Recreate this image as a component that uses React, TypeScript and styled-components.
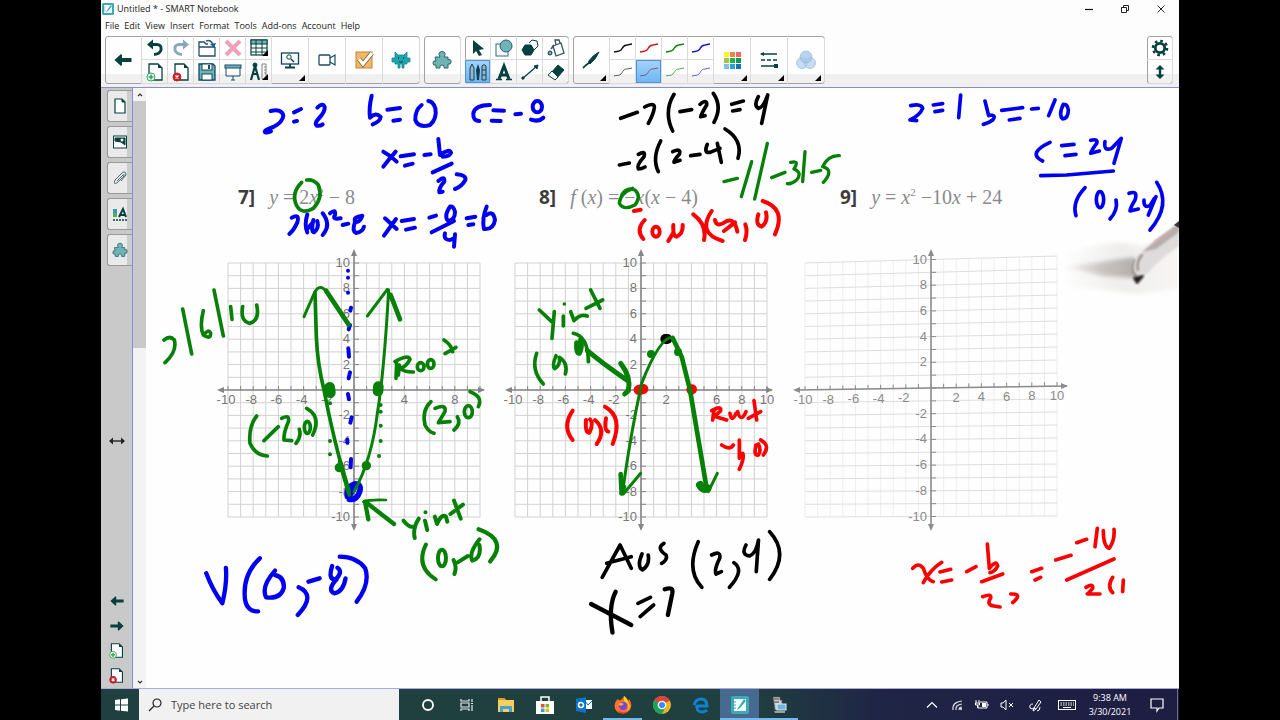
import React from "react";
import styled, { createGlobalStyle, css } from "styled-components";

const DARK = "#06403f";
const TEAL = "#6fb3b6";
const BLUE = "#0000f0";
const GREEN = "#078007";
const RED = "#fa0202";
const BLACK = "#000000";

const Global = createGlobalStyle`
  * { box-sizing: border-box; }
  body { margin: 0; background: #000; font-family: "Open Sans", "Noto Sans", sans-serif; }
  button { font: inherit; border: 0; padding: 0; background: none; color: inherit; }
`;

const Screen = styled.div`
  display: flex;
  flex-direction: column;
  min-height: 100vh;
  margin: 0 101px;
  background: #fdfdfd;
`;

const TitleBar = styled.header`
  display: flex;
  align-items: center;
  height: 17px;
  padding-left: 1px;
  font-size: 10px;
  color: #222;
`;

const Title = styled.h1`
  margin: 0 auto 0 3px;
  font-size: 9px;
  font-weight: 400;
`;

const WindowButton = styled.button`
  display: grid;
  place-items: center;
  width: 36px;
  height: 16px;
`;

const MenuBar = styled.nav`
  display: flex;
  align-items: center;
  gap: 5px;
  height: 16px;
  padding-left: 4px;
  font-size: 9px;
  color: #222;
`;

const ToolBar = styled.div`
  display: flex;
  gap: 4px;
  height: 55px;
  padding: 3px 6px 3px 4px;
  background: linear-gradient(#fdfdfd 41px, #f0f0f0 41px);
  border-bottom: 1px solid #8c8cc6;
`;

const ToolGroup = styled.div<{ $end?: boolean }>`
  display: flex;
  height: 48px;
  outline: 1px solid #a2a2a2;
  outline-offset: -1px;
  border-radius: 3px;
  overflow: hidden;
  background: linear-gradient(#fefefe 38px, #f1f1f1 38px);
  ${(p) => p.$end && "margin-left: auto;"}
`;

const Pairs = styled.div<{ $cols: number }>`
  display: grid;
  grid-template-columns: repeat(${(p) => p.$cols}, 26px);
  grid-template-rows: 24px 24px;
`;

const corner = css`
  &::after {
    content: "";
    position: absolute;
    right: 3px;
    bottom: 3px;
    border: 3px solid transparent;
    border-right-color: #000;
    border-bottom-color: #000;
  }
`;

const ToolButton = styled.button<{ $wide?: boolean; $menu?: boolean; $on?: boolean }>`
  position: relative;
  display: grid;
  place-items: center;
  width: ${(p) => (p.$wide ? "37px" : "auto")};
  border-right: 1px solid #dadada;
  ${Pairs} & {
    border-bottom: 1px solid #dadada;
  }
  ${(p) => p.$on && "background: linear-gradient(#a4d4fb, #6cb4f0); box-shadow: inset 0 0 0 1px #4d95d6;"}
  ${(p) => p.$menu && corner}
`;

const Main = styled.main`
  display: flex;
  flex: 1;
  border-bottom: 1px solid #a9a9dc;
`;

const SideBar = styled.aside`
  display: flex;
  flex-direction: column;
  align-items: center;
  width: 32px;
  padding-top: 2px;
  background: #c9c9c9;
  border-right: 1px solid #8c8cdc;
`;

const Tabs = styled.div`
  display: flex;
  flex-direction: column;
  align-self: flex-end;
  gap: 4px;
`;

const Tab = styled.button`
  display: grid;
  place-items: center;
  width: 25px;
  height: 32px;
  border: 1px solid #999;
  border-right: 0;
  border-radius: 3px 0 0 3px;
  background: linear-gradient(90deg, #eaeaea 19px, #cdcdcd 19px);
`;

const DragHandle = styled.button`
  margin: auto 0;
  padding-top: 32px;
`;

const PageTools = styled.div`
  display: flex;
  flex-direction: column;
`;

const PageTool = styled.button`
  display: grid;
  place-items: center;
  width: 24px;
  height: 25px;
`;

const ScrollBar = styled.div`
  display: flex;
  flex-direction: column;
  width: 13px;
  background: #f3f3f3;
`;

const ScrollButton = styled.button`
  display: grid;
  place-items: center;
  height: 13px;
`;

const Track = styled.div`
  flex: 1;
  display: flex;
`;

const Thumb = styled.div`
  width: 13px;
  height: 43%;
  background: #c9c9c9;
`;

const Sheet = styled.section`
  position: relative;
  flex: 1;
  min-width: 0;
  overflow: hidden;
  padding-top: 93px;
  background: #fefefe;
`;

const Equations = styled.div`
  display: flex;
  height: 65px;
  padding-left: 92px;
`;

const Equation = styled.h2`
  display: flex;
  align-items: baseline;
  gap: 14px;
  flex: none;
  width: 301px;
  margin: 0;
  font: 400 20px/32px "Liberation Serif", serif;
  color: #8a8a8a;
  white-space: nowrap;
  b { font: 700 19px/32px "Open Sans", sans-serif; color: #3c3c3c; }
  sup { font-size: 11px; line-height: 1; }
`;

const Graphs = styled.div`
  display: flex;
  gap: 12px;
  padding-left: 70px;
  svg { flex: none; display: block; }
`;

const InkLayer = styled.svg`
  position: absolute;
  top: 0;
  left: 0;
  pointer-events: none;
`;

const TaskBar = styled.footer`
  display: flex;
  height: 31px;
  background: linear-gradient(90deg, #20403f 60%, #1f2545 72%, #1e1d42);
  color: #fff;
`;

const TaskButton = styled.button<{ $open?: boolean; $on?: boolean }>`
  display: grid;
  place-items: center;
  width: 39px;
  height: 31px;
  ${(p) => p.$on && "background: #466a90;"}
  ${(p) => p.$open && "box-shadow: inset 0 -2px #76b9ed;"}
`;

const Search = styled.label`
  display: flex;
  align-items: center;
  gap: 8px;
  width: 260px;
  margin-left: -1px;
  margin-right: 9px;
  padding-left: 8px;
  background: #f1f1f1;
  color: #333;
`;

const SearchInput = styled.input`
  flex: 1;
  min-width: 0;
  border: 0;
  padding: 0;
  background: none;
  font: 400 11px/20px "Open Sans", sans-serif;
  &::placeholder { color: #444; opacity: 1; }
`;

const Tray = styled.div`
  display: flex;
  align-items: center;
  margin-left: auto;
  border-right: 1px solid #6c6c88;
  margin-right: 1px;
`;

const TrayButton = styled.button<{ $w?: number }>`
  display: grid;
  place-items: center;
  width: ${(p) => p.$w ?? 25}px;
  height: 31px;
`;

const Clock = styled.time`
  width: 54px;
  text-align: center;
  font-size: 9px;
  line-height: 14px;
`;

type IconProps = { size?: number; children: React.ReactNode };
const Icon = ({ size = 24, children }: IconProps) => (
  <svg width={size} height={size} viewBox={`${-size / 2} ${-size / 2} ${size} ${size}`} fill="none" stroke={DARK} strokeWidth="1" aria-hidden="true">
    {children}
  </svg>
);

const arrowLeft = "M-8.500 0 L-2 -6 L-1 -5 V-2 H8.500 V2 H-1 V5 L-2 6 Z";
const puzzle =
  "M-7 -3 H-2 Q-5 -8 0 -8.500 Q5 -8 2 -3 H6 V0 Q9 -2 9 2 Q9 5 6 4 V8 H2 Q3 5 0 5 Q-3 5 -2 8 H-6 V5 Q-9 6 -9 3 Q-9 0 -6 1 Z";
const sheetPath = "M-6 -8 H3 L7 -4 V8 H-6 Z";
const squiggle = "M-9 4 C-6 3 -4 4 -2 2 C0 0 0 -3 4 -3 L9 -4";

const NewPage = ({ bad, size }: { bad?: boolean; size?: number }) => (
  <svg width={size ?? 20} height={size ?? 20} viewBox="-10 -10 20 20" fill="none" aria-hidden="true">
    <path d={sheetPath} fill="#fff" stroke={DARK} strokeWidth="1.300" />
    <path d="M3 -8 L7 -4 H3 Z" fill={DARK} />
    <circle cx="-4" cy="5" r="4" fill={bad ? "#c8202c" : "#fff"} stroke={bad ? "#c8202c" : "#31a455"} />
    {bad ? <path d="M-5.500 3.500 l3 3 m0 -3 l-3 3" stroke="#fff" strokeWidth="1.400" /> : <path d="M-4 2.500 v5 M-6.500 5 h5" stroke="#31a455" strokeWidth="1.600" />}
  </svg>
);

const Squiggle = ({ c, thin }: { c: string; thin?: boolean }) => (
  <Icon>
    <path d={squiggle} stroke={c} strokeWidth={thin ? 0.8 : 1.4} />
  </Icon>
);

const Bubble = ({ r, fill, x, y }: { r: number; fill: string; x: number; y: number }) => (
  <circle cx={x} cy={y} r={r} fill={fill} fillOpacity="0.750" stroke="#8faed2" strokeWidth="0.600" />
);

const palette = ["#fff21c", "#f5814e", "#ef6868", "#9cca3c", "#20b14c", "#109a43", "#85bfe8", "#2b9fd8", "#1272b4"];

function Tools() {
  return (
    <ToolBar role="toolbar" aria-label="Tools">
      <ToolGroup>
        <ToolButton $wide aria-label="Previous page"><Icon><path d={arrowLeft} fill={DARK} stroke="none" /></Icon></ToolButton>
        <Pairs $cols={5}>
          <ToolButton aria-label="Undo"><Icon size={20}><path d="M-4 -3.500 H2 Q7 -3 6 2 Q5 6 -1 6.500" strokeWidth="3" /><path d="M-8 -3.500 L-2 -8.500 V1.500 Z" fill={DARK} stroke="none" /></Icon></ToolButton>
          <ToolButton aria-label="Redo"><Icon size={20}><path d="M4 -3.500 H-2 Q-7 -3 -6 2 Q-5 6 1 6.500" strokeWidth="3" stroke="#86a9bb" /><path d="M8 -3.500 L2 -8.500 V1.500 Z" fill="#86a9bb" stroke="none" /></Icon></ToolButton>
          <ToolButton aria-label="Open file"><Icon size={20}><path d="M-8 8 V-6 H-3 L-1 -4 H1 M8 -1 V8 H-8 M-8 -1 H8" stroke="#1e4f6c" strokeWidth="1.300" /><path d="M-1 -7 Q4 -9 6 -3" stroke="#1d5d8a" strokeWidth="1.600" /><path d="M3 -4 L9 -5 L7 0 Z" fill="#1d5d8a" stroke="none" /></Icon></ToolButton>
          <ToolButton aria-label="Delete"><Icon size={20}><path d="M-7 -7 L7 7 M7 -7 L-7 7" stroke="#efa0ba" strokeWidth="4" /></Icon></ToolButton>
          <ToolButton $menu aria-label="Table"><Icon size={20}><rect x="-8" y="-8" width="16" height="15" fill="#fff" strokeWidth="1.200" /><rect x="-8" y="-8" width="16" height="4" fill={TEAL} /><path d="M-8 0 H8 M-8 4 H8 M-3 -8 V7 M3 -8 V7" /></Icon></ToolButton>
          <ToolButton aria-label="Add page"><NewPage /></ToolButton>
          <ToolButton aria-label="Delete page"><NewPage bad /></ToolButton>
          <ToolButton aria-label="Save"><Icon size={20}><path d="M-8 -8 H6 L8 -6 V8 H-8 Z" fill={TEAL} stroke="#124b63" strokeWidth="1.300" /><rect x="-5" y="-8" width="10" height="6" fill="#fff" stroke="#124b63" /><rect x="-5" y="2" width="10" height="6" fill="#fff" stroke="#124b63" /><path d="M2 -7 V-3" stroke="#124b63" strokeWidth="2" /></Icon></ToolButton>
          <ToolButton aria-label="Screen shade"><Icon size={20}><rect x="-8" y="-7" width="16" height="3" fill={TEAL} stroke="#164c68" /><path d="M-7 -4 V4 H7 V-4 M0 4 V8 M-2 8 H2" stroke="#164c68" /></Icon></ToolButton>
          <ToolButton $menu aria-label="Measurement tools"><Icon size={20}><path d="M-4 -6 L-8 8 M-4 -6 L0 8 M-6 2 H-2" strokeWidth="2.200" /><circle cx="-4" cy="-7" r="2" fill={DARK} /><path d="M3 -8 H7 V7 H3 Z M5 -5 H7 M5 -2 H7 M5 1 H7" stroke="#848484" /></Icon></ToolButton>
        </Pairs>
        <ToolButton $wide $menu aria-label="Display view"><Icon><rect x="-8.500" y="-7" width="17" height="11" stroke="#12405c" strokeWidth="1.300" /><path d="M0 4 V7 M-5 7.500 H5" strokeWidth="1.800" /><circle cx="-1" cy="-3" r="2.200" /><path d="M1 -1 L4 2" strokeWidth="1.500" /></Icon></ToolButton>
        <ToolButton $wide aria-label="Record"><Icon><rect x="-8" y="-5" width="11" height="10" rx="1" stroke="#164c68" strokeWidth="1.300" /><path d="M3 -2 L8 -5 V5 L3 2" stroke="#164c68" strokeWidth="1.200" /></Icon></ToolButton>
        <ToolButton $wide aria-label="Assessment"><Icon><rect x="-8" y="-8" width="16" height="16" fill="#f5b764" stroke="#bd853f" /><path d="M-5 -1 L-1 4 L8 -7" stroke="#7a5a30" strokeWidth="4.600" /><path d="M-5 -1 L-1 4 L8 -7" stroke="#fff" strokeWidth="3.200" /></Icon></ToolButton>
        <ToolButton $wide aria-label="Activity monster"><Icon><path d="M-6 -8 L-3 -5 H3 L6 -8 V-2 H9 V2 H6 V4 H3 V8 H1 V4 H-1 V8 H-3 V4 H-6 V2 H-9 V-2 H-6 Z" fill="#1ba5ad" stroke="#128994" strokeWidth="0.800" /><path d="M-3 -2 h1 M2 -2 h1" strokeWidth="2" /><path d="M-2 2 H2" /></Icon></ToolButton>
      </ToolGroup>
      <ToolGroup>
        <ToolButton $wide aria-label="Add-ons"><Icon><path d={puzzle} fill={TEAL} stroke="#2f686e" /></Icon></ToolButton>
      </ToolGroup>
      <ToolGroup>
        <Pairs $cols={4}>
          <ToolButton aria-label="Select"><Icon size={20}><path d="M-5 -8 V6 L-2 3 L1 8 L4 7 L1 2 L6 1 Z" fill={DARK} stroke="none" /></Icon></ToolButton>
          <ToolButton aria-label="Shapes"><Icon size={20}><rect x="-8" y="-4" width="12" height="12" stroke="#2b6c80" /><circle cx="2" cy="-2" r="6" fill={TEAL} stroke="#226478" /></Icon></ToolButton>
          <ToolButton aria-label="Regular polygons"><Icon size={20}><path d="M-1 -5 L2 -8 L7 -7 L8 -2 L4 2" /><path d="M-8 2 L-5 -3 H1 L4 2 L1 7 H-5 Z" fill={DARK} /></Icon></ToolButton>
          <ToolButton aria-label="Fill"><Icon size={20}><path d="M-3 -2 L5 -5 L8 5 L0 8 Z M0 -3 L-1 -8 H3 L4 -5" stroke="#34535b" strokeWidth="1.300" /><path d="M-2 -3 L-5 1" stroke="#34535b" strokeWidth="1.600" /><circle cx="-6" cy="5" r="2" fill={TEAL} stroke={DARK} /></Icon></ToolButton>
          <ToolButton $on aria-label="Pens"><Icon size={20}><path d="M-8 8 V-4 L-6 -8 L-4 -4 V8 Z M4 8 V-6 Q6 -9 8 -6 V8 Z M4 -2 H8 M4 3 H8" stroke="#173f56" fill="#8fb9cc" /><path d="M0 -8 L2 -2 L1 8 H-1 L-2 -2 Z" fill="#103d52" stroke="none" /></Icon></ToolButton>
          <ToolButton aria-label="Text"><Icon size={20}><path d="M-5 7 L0 -6 L5 7 M-4 3 H4" strokeWidth="3" /><path d="M-8 7.500 H-2 M2 7.500 H8" strokeWidth="1.600" /></Icon></ToolButton>
          <ToolButton aria-label="Lines"><Icon size={20}><path d="M-8 7 L7 -6" strokeWidth="1.300" /><path d="M8 -7 L4 -6 L7 -3 Z M-8 5 h2 v2 h-2 Z" fill={DARK} /></Icon></ToolButton>
          <ToolButton aria-label="Eraser"><Icon size={20}><path d="M2 -7 L8 -2 L0 7 L-6 2 Z" fill={DARK} /><path d="M-4 -1 L2 5 L-1 8 L-8 3 Z" fill="#fff" /></Icon></ToolButton>
        </Pairs>
      </ToolGroup>
      <ToolGroup>
        <ToolButton $wide $menu aria-label="Pen type"><Icon><path d="M8 -8 Q2 -5 -3 2 L-1 4 Q5 -1 8 -8 Z" fill={DARK} stroke={DARK} /><path d="M-2 3 Q-4 4 -8 8" strokeWidth="1.800" /></Icon></ToolButton>
        <Pairs $cols={4}>
          <ToolButton aria-label="Black pen"><Squiggle c="#111" /></ToolButton>
          <ToolButton aria-label="Red pen"><Squiggle c="#d01818" /></ToolButton>
          <ToolButton aria-label="Green pen"><Squiggle c="#168016" /></ToolButton>
          <ToolButton aria-label="Blue pen"><Squiggle c="#1616d8" /></ToolButton>
          <ToolButton aria-label="Thin black pen"><Squiggle thin c="#333" /></ToolButton>
          <ToolButton $on aria-label="Thin red pen"><Squiggle thin c="#7d3d62" /></ToolButton>
          <ToolButton aria-label="Thin green pen"><Squiggle thin c="#259025" /></ToolButton>
          <ToolButton aria-label="Thin blue pen"><Squiggle thin c="#3a3ae0" /></ToolButton>
        </Pairs>
        <ToolButton $wide $menu aria-label="Colour">
          <Icon>{palette.map((c, i) => <rect key={c} x={-8 + (i % 3) * 6} y={-8 + Math.floor(i / 3) * 6} width="5" height="5" fill={c} stroke="none" />)}</Icon>
        </ToolButton>
        <ToolButton $wide $menu aria-label="Line style"><Icon><path d="M-8 -6 H8" strokeWidth="1.400" /><path d="M-9 -6 l4 -2 v4 Z M5 4 h4 v4 h-4 Z" fill={DARK} stroke="none" /><path d="M-8 0 H9" strokeDasharray="4 2" strokeWidth="1.400" /><path d="M-8 6 H5" strokeWidth="1.400" /></Icon></ToolButton>
        <ToolButton $wide $menu aria-label="Transparency"><Icon><Bubble x={-4} y={3} r={5.5} fill="#b4d2ef" /><Bubble x={4} y={3} r={5.5} fill="#b4d2ef" /><Bubble x={0} y={-3} r={6} fill="#a3c6ea" /></Icon></ToolButton>
      </ToolGroup>
      <ToolGroup $end>
        <Pairs $cols={1}>
          <ToolButton aria-label="Settings"><Icon size={20}><circle r="4.700" strokeWidth="2.800" /><circle r="7" strokeWidth="2.600" strokeDasharray="2.600 2.898" /></Icon></ToolButton>
          <ToolButton aria-label="Move toolbar"><Icon size={20}><path d="M0 -5 V5" strokeWidth="2.400" /><path d="M0 -7 L4.500 -2.500 H-4.500 Z M0 7 L4.500 2.500 H-4.500 Z" fill={DARK} stroke="none" /></Icon></ToolButton>
        </Pairs>
      </ToolGroup>
    </ToolBar>
  );
}

type GraphProps = { left: number; hiddenX?: number[]; tilt?: boolean; faint?: boolean; right?: number };
const steps = Array.from({ length: 21 }, (_, i) => i - 10);
const evens = [-10, -8, -6, -4, -2, 2, 4, 6, 8, 10];

function Graph({ left, hiddenX = [], tilt, faint, right = 275 }: GraphProps) {
  const unit = 12.6;
  const cx = left + unit * 10;
  const cy = 144;
  const px = (v: number) => cx + v * unit;
  const rise = (x: number, v: number) => (tilt ? ((x + 10) / 20) * (4 + v * 0.3) : 0);
  const py = (v: number, x = 0) => cy - v * 12.7 - rise(x, v);
  const grid = faint ? "#dedede" : "#d2d2d2";
  const axis = faint ? "#8c8c8c" : "#858585";
  return (
    <svg width="276" height="290" viewBox="0 0 276 290" role="img" aria-label="Coordinate grid from -10 to 10">
      <g stroke={grid} strokeWidth="1">
        {steps.map((v) => <path key={v} d={`M${px(-10)} ${py(v, -10)} L${px(10)} ${py(v, 10)}`} />)}
        {steps.map((v) => <path key={v} opacity={faint ? 0.5 : 1} d={`M${px(v)} ${py(10, v)} L${px(v)} ${py(-10, v)}`} />)}
      </g>
      <g stroke={axis} fill={axis}>
        <path strokeWidth="1.600" d={`M3 ${py(0, -10)} L${right} ${py(0, 10)} M${cx} 6 V282`} />
        <path stroke="none" d={`M1 ${py(0, -10)} l7 -3 v6 Z M${right + 1} ${py(0, 10)} l-7 -3 v6 Z M${cx} 3 l-3 7 h6 Z M${cx} 285 l-3 -7 h6 Z`} />
        {steps.map((v) => <path key={v} d={`M${cx} ${py(v)} h5 M${px(v)} ${py(0, v)} v-4`} />)}
      </g>
      <g fontFamily="Liberation Sans, sans-serif" fontSize="13" fill={faint ? "#8a8a8a" : "#777"}>
        {evens.filter((v) => !hiddenX.includes(v)).map((v) => <text key={v} textAnchor="middle" x={px(v) - (v < 0 ? 2 : 0)} y={py(0, v) + 14}>{v}</text>)}
        {evens.map((v) => <text key={v} textAnchor="end" x={cx - 4} y={py(v) + 4}>{v}</text>)}
      </g>
    </svg>
  );
}

/* Closed oval loop of a pen stroke. */
const oval = (x: number, y: number, rx: number, ry: number) =>
  `M${x - rx} ${y} a${rx} ${ry} 0 1 0 ${rx * 2} 0 a${rx} ${ry} 0 1 0 ${-rx * 2} 0`;
const dots = (...points: number[][]) => points.map(([x, y]) => `M${x} ${y} h.1`).join(" ");

type Stroke = { color: string; w: number; d: string };
type InkGroup = { x: number; y: number; kx?: number; strokes: Stroke[] };

const ink: InkGroup[] = [
  {
    x: 100, y: 85,
    strokes: [
      { color: BLUE, w: 12, d: "M512 78 Q545 70 550 92 Q548 112 520 126 Q490 136 495 142 Q505 144 513 139 M582 82 L603 72 M582 110 L591 108 M652 68 Q668 52 674 66 Q676 80 655 102 Q642 116 650 122 Q660 124 668 118" },
      { color: BLUE, w: 12, d: "M815 32 Q806 70 810 98 Q828 80 842 96 Q840 110 818 118 M862 74 L900 69 M880 107 L900 104 M965 60 Q945 75 946 105 Q955 130 990 120 Q1012 100 1006 70 Q1000 50 985 48 M1170 60 Q1125 60 1120 85 Q1118 108 1138 108 M1180 76 L1212 77 M1175 107 L1202 108" },
      { color: BLUE, w: 12, d: "M850 200 Q870 210 890 230 M887 200 Q865 225 850 245 M902 214 L942 208 M915 242 L938 236 M973 210 L992 208 M1015 162 L1020 210 M1022 208 Q1048 190 1053 203 Q1050 214 1028 215 M998 262 L1055 236 M1015 288 Q1035 270 1033 290 Q1015 310 1018 322 L1028 320 M1070 268 Q1100 270 1096 285 Q1085 305 1065 312" },
      { color: BLUE, w: 12, d: "M575 398 Q600 385 592 412 Q582 435 568 447 M622 388 Q612 420 622 442 M640 405 Q632 440 642 442 Q658 430 652 408 M624 430 L640 410 M668 385 Q695 420 668 450 M690 385 Q708 370 705 390 Q695 405 722 400 M728 420 L745 416 M787 392 Q760 395 765 410 Q778 414 786 395 M765 412 Q755 438 768 444 Q788 442 792 425" },
      { color: BLUE, w: 12, d: "M855 400 L890 432 M888 402 L852 452 M905 408 L942 402 M918 434 L945 428 M988 398 L1008 392 M1050 365 Q1030 395 1045 408 Q1065 405 1065 380 Q1060 362 1050 365 M995 442 L1062 408 M1035 445 Q1030 465 1050 465 L1062 460 M1065 448 L1062 485 M1100 400 L1126 395 M1105 420 L1120 418 M1160 365 Q1145 400 1152 432 Q1180 435 1185 405 Q1180 375 1160 390" },
      { color: GREEN, w: 11, d: "M605 292 Q572 325 590 362 Q605 390 640 370 Q670 340 655 300 Q640 282 620 285" },
    ],
  },
  {
    x: 500, y: 85,
    strokes: [
      { color: BLUE, w: 12, d: `M46 88 L63 86 ${oval(112, 65, 14, 17)} M93 104 Q115 112 130 98` },
      { color: BLACK, w: 11, d: "M362 100 L412 82 M434 66 Q464 50 463 68 Q460 88 445 115 M522 28 Q490 80 518 138 M540 80 L575 74 M600 58 Q622 40 620 60 Q605 85 602 95 L615 92 M640 25 Q668 65 642 112 M695 58 L730 48 M698 78 L720 74 M775 35 Q760 62 775 70 Q790 68 803 30 L785 115" },
      { color: BLACK, w: 11, d: "M358 240 L388 234 M415 208 Q438 195 432 215 Q408 242 415 252 Q425 252 435 246 M482 168 Q455 220 475 260 M518 200 Q545 188 538 208 Q522 225 522 232 L540 226 M572 212 L600 208 M622 178 Q610 205 630 202 L660 190 M652 175 L664 232 M675 132 Q730 165 714 220" },
      { color: GREEN, w: 10, d: "M672 290 L712 280 M755 230 L724 335 M802 175 L764 342 M815 278 L855 262 M872 232 Q900 225 882 252 Q908 262 890 285 Q875 298 862 296 M915 200 L908 290 M935 262 L962 256 M1018 212 Q985 210 968 245 Q1004 255 970 292 M398 310 Q360 325 358 355 Q370 378 405 360 Q425 335 405 315 Q380 305 365 330" },
      { color: RED, w: 12, d: `M402 378 L422 374 M434 405 Q406 435 430 462 ${oval(468, 440, 11, 15)} M505 468 L518 446 M520 420 Q518 455 530 455 Q550 445 548 420 M580 388 Q622 420 612 465 M635 378 Q590 445 668 468 M645 405 Q650 430 680 408 Q705 400 712 440 M705 412 L672 438 M736 418 Q744 440 735 465 M775 388 Q765 420 785 425 Q805 410 798 382 M788 348 Q860 370 825 448` },
    ],
  },
  {
    x: 820, y: 85,
    strokes: [
      { color: BLUE, w: 11, d: "M272 62 Q305 55 308 70 Q300 90 270 105 L290 107 M340 60 L368 56 M345 80 L368 76 M422 30 L416 98 M495 48 L506 92 M510 90 Q530 90 518 105 Q505 115 490 118 M545 76 L608 68 M568 105 L600 100 M635 72 L655 70 M705 45 L686 92 M730 58 Q715 90 728 102 Q745 100 745 75 Q742 55 730 60" },
      { color: BLUE, w: 11, d: `M690 172 Q620 205 668 228 M725 182 L762 178 M735 212 L768 208 M812 166 Q835 160 830 175 Q815 195 812 205 L838 198 M855 170 Q850 200 875 190 L904 160 L882 235 M662 272 L740 270 L880 258 M795 308 Q755 350 768 392 ${oval(840, 344, 11, 24)} M888 345 Q895 375 870 402 M927 325 Q955 315 945 345 Q930 370 930 378 L955 372 M972 345 Q970 370 990 362 L1003 340 M1008 335 L985 390 M1010 292 Q1055 360 990 435` },
    ],
  },
  {
    x: 150, y: 240,
    strokes: [
      { color: BLUE, w: 12, d: `${dots([594, 92], [594, 113], [594, 158])} M603 203 L601 212 M600 255 L596 268 M595 325 L597 350 M600 397 L596 415 M594 462 L597 478 M605 532 L601 548 M592 599 L592 608 M603 657 L602 682` },
      { color: BLUE, w: 17, d: "M592 770 Q588 742 612 732 Q636 730 629 755 Q620 782 598 778 M610 745 L600 765" },
      { color: GREEN, w: 11, d: "M495 158 L499 290 Q502 370 522 450 Q548 590 598 765" },
      { color: GREEN, w: 9, d: "M462 230 L495 155 Q510 130 530 155 M612 755 Q665 660 682 520 Q702 400 716 150 M652 228 L712 148 L730 190" },
      { color: GREEN, w: 14, d: "M528 152 L596 254 M722 165 L750 238 M570 665 L596 755" },
      { color: GREEN, w: 28, d: dots([568, 683], [649, 677]) },
      { color: GREEN, w: 32, d: "M539 442 L541 458 M685 440 L684 453" },
      { color: GREEN, w: 12, d: dots([540, 490], [540, 603], [540, 643], [692, 495], [692, 515], [692, 557], [692, 603], [687, 648]) },
      { color: GREEN, w: 11, d: "M42 300 Q60 285 73 300 Q82 335 45 368 M98 207 L125 342 M160 212 Q148 260 160 285 Q182 300 182 280 Q175 265 162 285 M192 150 L220 288 M242 200 L246 238 M278 200 Q270 245 300 250 Q330 240 320 195" },
      { color: GREEN, w: 11, d: `M740 370 L738 415 M745 405 L748 375 M735 365 Q775 342 780 358 Q770 380 750 385 Q765 397 790 396 ${oval(812, 380, 10, 12)} ${oval(842, 372, 10, 13)} M882 300 Q905 315 908 335 M885 341 L918 322` },
      { color: GREEN, w: 11, d: `M320 528 Q295 560 300 610 Q315 645 352 648 M342 602 L385 560 M395 535 Q420 522 415 545 Q400 580 402 600 L425 602 M448 568 Q455 590 438 610 ${oval(472, 562, 9, 18)} M470 505 Q515 530 488 585` },
      { color: GREEN, w: 11, d: `M843 485 Q815 510 825 555 Q835 575 852 580 M855 505 Q890 490 885 515 Q870 540 865 548 L900 545 M922 530 Q935 550 912 570 ${oval(955, 515, 12, 18)} M960 455 Q1000 470 985 500` },
      { color: GREEN, w: 13, d: "M645 785 L655 838 M652 790 L732 852" },
      { color: GREEN, w: 8, d: "M640 785 Q660 778 708 780" },
    ],
  },
  {
    x: 500, y: 240,
    strokes: [
      { color: RED, w: 30, d: "M416 450 L430 447 M574 449 L576 448" },
      { color: BLACK, w: 30, d: "M496 297 L502 297" },
      { color: GREEN, w: 9, d: "M518 292 Q480 290 425 430 Q390 590 368 755 M370 762 L422 700 M625 755 L652 700" },
      { color: GREEN, w: 14, d: "M518 294 L545 350 L570 450 L620 745 M362 702 L365 760 M372 740 L364 760" },
      { color: GREEN, w: 24, d: `${dots([453, 342], [534, 336])} M600 735 Q608 752 622 745` },
      { color: GREEN, w: 11, d: "M118 210 L155 245 M163 215 L156 295 M190 228 L190 258 M193 192 h.1 M212 215 L222 242 Q240 220 262 228 M272 150 L300 205 M258 205 L308 180 M110 340 Q92 390 130 432 M168 347 Q155 380 164 386 Q182 375 178 352 Q205 370 196 402 M220 280 Q265 290 265 365" },
      { color: GREEN, w: 15, d: "M230 308 Q228 340 238 340 Q248 320 242 300 M262 332 Q310 372 380 420 M362 370 Q394 410 385 452 L374 462" },
      { color: RED, w: 12, d: "M218 512 Q185 560 218 600 M258 540 Q255 580 268 578 Q282 550 270 538 M285 540 Q320 570 290 612 M318 535 Q312 572 325 575 M315 500 Q370 530 338 612" },
      { color: RED, w: 11, d: "M642 510 L638 540 M635 512 Q665 495 662 512 Q650 525 640 528 L680 540 M690 520 Q695 550 708 520 M713 515 Q722 550 738 515 M762 482 L770 540 M745 535 L782 515 M665 615 Q690 632 700 615 M718 600 L718 655 L728 640 Q735 650 718 688 M768 615 Q760 650 775 645 Q785 630 775 612 M782 600 Q812 615 790 645" },
    ],
  },
  {
    x: 790, y: 240,
    strokes: [
      { color: RED, w: 11, d: "M368 985 Q385 965 400 985 Q410 1020 430 1025 M455 967 Q420 990 400 1028 M450 996 L482 988 M455 1026 L485 1020 M530 995 L558 980 M592 912 L598 985 Q620 958 623 978 Q615 995 600 998 M575 1025 L638 1002 M578 1070 Q605 1060 602 1074 Q588 1095 612 1098 L630 1101 M662 1062 Q700 1060 668 1088 M725 995 L755 985 M735 1020 L752 1012 M797 960 L843 946 M860 908 L890 898 M922 865 L915 920 M940 872 Q940 920 958 925 Q975 900 972 868 M830 1020 L972 957 M888 1042 Q910 1028 908 1045 Q895 1060 892 1062 L930 1062 M968 1012 Q950 1040 968 1058 M1000 1020 L998 1055" },
    ],
  },
  {
    x: 100, y: 500, kx: 2.24,
    strokes: [
      { color: GREEN, w: 12, d: `M680 62 Q692 82 700 80 M714 56 Q700 85 705 114 M728 62 L733 90 M729 37 h.1 M750 50 L755 72 Q765 40 775 50 L778 65 M793 2 L808 56 M785 42 L813 14 M730 134 Q706 200 752 238 ${oval(766, 174, 9, 25)} M792 180 Q800 200 794 222 M800 188 L824 168 M850 118 Q825 160 834 182 Q855 175 850 135` },
      { color: GREEN, w: 13, d: "M848 88 Q915 120 874 184" },
      { color: BLUE, w: 13, d: "M238 220 Q252 270 274 310 Q285 250 282 204 M358 175 Q322 220 324 285 Q325 335 354 334 M392 212 Q360 260 372 292 Q405 298 412 262 Q412 230 392 225 M445 262 Q485 285 443 345 M467 245 L492 235 M520 198 Q510 240 528 238 Q545 215 532 203 M530 238 Q508 270 525 280 Q545 275 550 235 M537 170 Q575 170 594 205 Q606 250 575 305" },
      { color: BLACK, w: 11, d: "M1125 232 L1165 135 L1190 205 M1135 190 L1190 170 M1214 162 Q1202 200 1215 210 Q1232 195 1228 165 M1263 130 Q1245 145 1268 165 Q1272 180 1258 190 M1340 125 Q1312 210 1348 262 M1370 165 Q1392 150 1388 175 Q1375 210 1380 222 L1392 215 M1420 188 Q1445 210 1410 262 M1447 135 Q1435 165 1455 168 Q1470 160 1475 120 L1470 215 M1500 95 Q1545 160 1500 238 M1205 310 L1233 292 M1210 350 L1240 315" },
      { color: BLACK, w: 13, d: "M1100 312 L1190 375 M1155 275 Q1138 320 1148 398 M1265 268 Q1285 258 1282 280 L1272 345" },
    ],
  },
];

function Ink() {
  return (
    <InkLayer width="1033" height="600" viewBox="146 88 1033 600" fill="none" strokeLinecap="round" strokeLinejoin="round" role="img" aria-label="Pen annotations">
      <defs>
        <linearGradient id="wedge"><stop offset="0" stopColor="#f6f5f4" /><stop offset="0.500" stopColor="#c9c5c2" /><stop offset="1" stopColor="#b3ada9" /></linearGradient>
        <linearGradient id="glow"><stop offset="0" stopColor="#fdfdfd" /><stop offset="0.500" stopColor="#efeeec" /><stop offset="1" stopColor="#f7f6f5" /></linearGradient>
        <filter id="wide" x="-20%" y="-40%" width="140%" height="180%"><feGaussianBlur stdDeviation="2" /></filter>
        <filter id="fine" x="-20%" y="-20%" width="140%" height="140%"><feGaussianBlur stdDeviation="0.800" /></filter>
      </defs>
      <path d="M1064 256 Q1110 236 1142 246 L1179 230 V288 L1140 294 L1064 286 Z" fill="url(#glow)" filter="url(#wide)" />
      <path d="M1066 267 L1134 257 L1136 278 L1104 276 Z" fill="url(#wedge)" filter="url(#wide)" />
      <path d="M1134 258 Q1140 254 1148 248 L1179 222 V246 Q1162 258 1152 268 Q1144 279 1136 277 Q1128 266 1134 258 Z" fill="#dedbda" filter="url(#fine)" />
      <path d="M1142 252 L1160 237 L1179 223 V232 L1156 249 Z" fill="#b5aead" filter="url(#fine)" />
      <path d="M1155 242 L1170 232" stroke="#d3aaa2" strokeWidth="2" filter="url(#fine)" />
      <path d="M1134 260 Q1130 270 1136 276 M1142 255 Q1136 262 1138 270" stroke="#8b827e" strokeWidth="2" filter="url(#fine)" />
      <path d="M1134 278 L1143 276 L1137 283 Z" fill="#1c1816" stroke="#2a2422" strokeWidth="2" filter="url(#fine)" />
      <path d="M1174 225 L1179 221 V228 Z" fill="#3c3434" />
      {ink.map((g, i) => (
        <g key={i} transform={`translate(${g.x} ${g.y}) scale(${1 / (g.kx ?? 3)} ${1 / 3})`}>
          {g.strokes.map((s, j) => <path key={j} d={s.d} stroke={s.color} strokeWidth={s.w / 3} vectorEffect="non-scaling-stroke" />)}
        </g>
      ))}
    </InkLayer>
  );
}

const Chevron = ({ up }: { up?: boolean }) => (
  <Icon size={8}><path d={up ? "M-2 1 L0 -1 L2 1" : "M-2 -1 L0 1 L2 -1"} stroke="#333" strokeWidth="1.200" /></Icon>
);

const Notebook = ({ size = 18 }: { size?: number }) => (
  <svg width={size} height={size} viewBox="0 0 18 18" fill="none" aria-hidden="true">
    <rect width="18" height="18" rx="2" fill="#3fa9b5" />
    <rect x="3" y="3" width="12" height="12" fill="#f4fdfd" />
    <path d="M7 12 L13 3 L15 5 L9 12 L6 14 Z" fill="#3fa9b5" />
    <path d="M2 6 h3 M2 9 h3 M2 12 h3" stroke="#3fa9b5" />
  </svg>
);

export default function App() {
  return (
    <>
      <Global />
      <Screen>
        <TitleBar>
          <Notebook size={12} />
          <Title>Untitled * - SMART Notebook</Title>
          <WindowButton aria-label="Minimize"><Icon size={12}><path d="M-4 0.500 H4" stroke="#111" strokeWidth="1.200" /></Icon></WindowButton>
          <WindowButton aria-label="Restore"><Icon size={12}><path d="M-3.500 -1.500 H1.500 V3.500 H-3.500 Z M-1.500 -1.500 V-3.500 H3.500 V1.500 H1.500" stroke="#222" /></Icon></WindowButton>
          <WindowButton aria-label="Close"><Icon size={12}><path d="M-3.500 -3.500 L3.500 3.500 M3.500 -3.500 L-3.500 3.500" stroke="#222" /></Icon></WindowButton>
        </TitleBar>
        <MenuBar>
          {["File", "Edit", "View", "Insert", "Format", "Tools", "Add-ons", "Account", "Help"].map((m) => <button key={m}>{m}</button>)}
        </MenuBar>
        <Tools />
        <Main>
          <SideBar>
            <Tabs>
              <Tab aria-label="Page sorter"><Icon size={18}><path d="M-5 -7 H2 L5 -4 V7 H-5 Z" fill="#fff" strokeWidth="1.200" /><path d="M2 -7 L5 -4 H2 Z" fill={DARK} /></Icon></Tab>
              <Tab aria-label="Gallery"><Icon size={18}><rect x="-6.500" y="-6" width="13" height="12" fill="#fff" /><path d="M-5 -4 H5 V3 L1 0 L-5 -1 Z" fill={DARK} /><circle cx="2" cy="-2" r="1.500" fill="#fff" stroke="none" /></Icon></Tab>
              <Tab aria-label="Attachments"><Icon size={18}><path d="M-3 3 L3 -3 Q5 -4 4 -2 L-3 5 Q-7 7 -5 2 L2 -5 Q6 -8 6 -3 L1 3" stroke="#4c6a70" /></Icon></Tab>
              <Tab aria-label="Properties"><Icon size={18}><rect x="-7" y="-5" width="4" height="4" fill="#3b97c0" stroke="none" /><rect x="-7" y="-1" width="4" height="4" fill="#4fb053" stroke="none" /><path d="M-1 3 L3 -5 L6 3 M0 1 H5" strokeWidth="2" /><path d="M-7 6 H7" strokeDasharray="2 1" strokeWidth="1.400" /></Icon></Tab>
              <Tab aria-label="Add-ons"><Icon size={18}><path d={puzzle} transform="scale(.8)" fill={TEAL} stroke="#2f686e" /></Icon></Tab>
            </Tabs>
            <DragHandle aria-label="Resize side bar"><Icon size={18}><path d="M-6 0 H6" stroke="#222" strokeWidth="1.400" /><path d="M-8 0 l4 -3.500 v7 Z M8 0 l-4 -3.500 v7 Z" fill="#222" stroke="none" /></Icon></DragHandle>
            <PageTools>
              <PageTool aria-label="Previous page"><Icon size={20}><path d={arrowLeft} transform="scale(.78)" fill={DARK} stroke="none" /></Icon></PageTool>
              <PageTool aria-label="Next page"><Icon size={20}><path d={arrowLeft} transform="scale(-.78 .78)" fill={DARK} stroke="none" /></Icon></PageTool>
              <PageTool aria-label="Add page"><NewPage size={17} /></PageTool>
              <PageTool aria-label="Delete page"><NewPage bad size={17} /></PageTool>
            </PageTools>
          </SideBar>
          <ScrollBar>
            <ScrollButton aria-label="Scroll up"><Chevron up /></ScrollButton>
            <Track><Thumb /></Track>
            <ScrollButton aria-label="Scroll down"><Chevron /></ScrollButton>
          </ScrollBar>
          <Sheet>
            <Equations>
              <Equation><b>7]</b><span><i>y</i> = 2<i>x</i><sup>2</sup> − 8</span></Equation>
              <Equation><b>8]</b><span><i>f</i> (<i>x</i>) = −<i>x</i>(<i>x</i> − 4)</span></Equation>
              <Equation><b>9]</b><span><i>y</i> = <i>x</i><sup>2</sup> −10<i>x</i> + 24</span></Equation>
            </Equations>
            <Graphs>
              <Graph left={12} hiddenX={[2, 6, 10]} right={268} />
              <Graph left={11} hiddenX={[4]} right={268} />
              <Graph left={13} tilt faint />
            </Graphs>
            <Ink />
          </Sheet>
        </Main>
        <TaskBar>
          <TaskButton aria-label="Start"><Icon size={16}><path d="M-6 -5 L-1 -5.700 V-0.500 H-6 Z M0 -5.800 L7 -6.500 V-0.500 H0 Z M-6 0.500 H-1 V5.700 L-6 5 Z M0 0.500 H7 V6.500 L0 5.800 Z" fill="#fff" stroke="none" /></Icon></TaskButton>
          <Search>
            <Icon size={16}><circle cx="2" cy="-2" r="4" stroke="#222" strokeWidth="1.200" /><path d="M-1 1 L-6 6" stroke="#222" strokeWidth="1.200" /></Icon>
            <SearchInput aria-label="Search" placeholder="Type here to search" />
          </Search>
          <TaskButton aria-label="Cortana"><Icon size={18}><circle r="5" stroke="#fff" strokeWidth="1.800" /></Icon></TaskButton>
          <TaskButton aria-label="Task view"><Icon size={18}><path d="M-6 -6 V-4 H2 V-6 M-6 6 V4 H2 V6 M-6 -2 H2 V2 H-6 Z M5 -6 V-3 M5 0 V6 M4 -1.500 h2" stroke="#e4ecec" strokeWidth="1.200" /></Icon></TaskButton>
          <TaskButton aria-label="File Explorer"><Icon size={20}><path d="M-8 -7 H-2 L0 -5 H8 V7 H-8 Z" fill="#f7cf5d" stroke="none" /><path d="M-8 -7 H-2 L0 -5 H-8 Z" fill="#dc9d20" stroke="none" /><path d="M-6 7 V1 H6 V7 H3 V4 H-3 V7 Z" fill="#4a9fd8" stroke="none" /></Icon></TaskButton>
          <TaskButton aria-label="Store"><Icon size={20}><path d="M-4 -4 V-8 H4 V-4" stroke="#fff" strokeWidth="1.500" /><path d="M-9 -4 H9 V9 H-9 Z" fill="#fff" stroke="none" /><path d="M-4 -1 h3.500 v3.500 h-3.500 Z" fill="#e8502a" stroke="none" /><path d="M.5 -1 h3.500 v3.500 h-3.500 Z" fill="#7eb82c" stroke="none" /><path d="M-4 3.500 h3.500 v3.500 h-3.500 Z" fill="#2ba3e0" stroke="none" /><path d="M.5 3.500 h3.500 v3.500 h-3.500 Z" fill="#f5b61e" stroke="none" /></Icon></TaskButton>
          <TaskButton aria-label="Outlook"><Icon size={20}><path d="M0 -5 H8 V4 H0 Z" fill="#f0f7fd" stroke="none" /><path d="M1 -4 L4 0 L8 -4" stroke="#1878c8" /><path d="M-8 -6 L2 -8 V8 L-8 6 Z" fill="#0e74c8" stroke="none" /><circle cx="-3" cy="0" r="2.500" stroke="#fff" strokeWidth="1.500" /></Icon></TaskButton>
          <TaskButton $open aria-label="Firefox"><Icon size={20}><path d="M-5 -6 Q-4 -4 -2 -5 Q0 -7 1 -9 Q4 -7 5 -4 Q6 -5 6 -6 Q10 0 7 5 Q3 9 -1 8.500 Q-8 8 -8.500 1 Q-8 -4 -5 -6 Z" fill="#ff7328" stroke="none" /><path d="M1 -9 Q5 -6 5 -3 Q9 3 4 6 Q8 -1 1 -4 Z" fill="#ffd02c" stroke="none" /><path d="M-8 2 Q-4 9 4 7 Q1 10 -4 7 Z" fill="#ee2862" stroke="none" /><circle cx="0" cy="1" r="4" fill="#7746d8" stroke="none" /><path d="M-5 -1 Q-2 -3 1 -1 Q-1 0 -2 1 Z" fill="#ffad32" stroke="none" /></Icon></TaskButton>
          <TaskButton aria-label="Chrome"><Icon size={20}><circle r="9" fill="#e6b727" stroke="none" /><path d="M0 0 L-7.800 -4.500 A9 9 0 0 1 7.800 -4.500 Z" fill="#db4437" stroke="none" /><path d="M0 0 L-7.800 -4.500 A9 9 0 0 0 0 9 L3.500 2 Z" fill="#1fa05b" stroke="none" /><circle r="3.700" fill="#4286f4" stroke="#fff" strokeWidth="1.300" /></Icon></TaskButton>
          <TaskButton aria-label="Edge"><Icon size={20}><path d="M-4 1 H6 Q6 -6 0 -6 Q-5 -6 -7 0 M-4 0 Q-5 7 1 7 Q4 7 6 5" stroke="#0f82d8" strokeWidth="3" /></Icon></TaskButton>
          <TaskButton $on $open aria-label="SMART Notebook"><Notebook /></TaskButton>
          <TaskButton $open aria-label="SMART Recorder"><Icon size={20}><path d="M-6 -8 H1 V-5 H3 V5 H-4 Z" fill="#c8ccce" stroke="#555" strokeWidth="0.700" /><path d="M-5 -6 H0 M-5 -3 H0" stroke="#444" /><rect x="-2" y="-1" width="9" height="6" fill="#6ab4e6" stroke="#e8e8e8" /><path d="M-5 6 H6 V8 H-4 Z" fill="#9ba1a3" stroke="none" /></Icon></TaskButton>
          <Tray>
            <TrayButton aria-label="Show hidden icons"><Icon size={16}><path d="M-5 2.500 L0 -2.500 L5 2.500" stroke="#fff" strokeWidth="1.200" /></Icon></TrayButton>
            <TrayButton aria-label="Network"><Icon size={16}><path d="M-4 5 Q-5 -3 5 -4 M-1 5 Q-2 0 5 -1 M2 5 Q2 2 5 2" stroke="#ddd" strokeWidth="1.200" /><circle cx="4" cy="4" r="1" fill="#fff" stroke="none" /></Icon></TrayButton>
            <TrayButton aria-label="Battery"><Icon size={16}><path d="M-2 -3 H5 V3 H-4 V1 M6 -1 V1 M-6 -5 V-2 M-3 -5 V-2 M-6.500 -2 H-2.500 V0 H-6.500 Z M-4.500 0 V3" stroke="#fff" /><rect x="0" y="-2" width="4" height="4" fill="#fff" stroke="none" /></Icon></TrayButton>
            <TrayButton aria-label="Volume"><Icon size={16}><path d="M-6 -2 H-4 L-1 -5 V5 L-4 2 H-6 Z M2 -2 L6 2 M6 -2 L2 2" stroke="#fff" /></Icon></TrayButton>
            <TrayButton $w={32} aria-label="Windows Ink"><Icon size={16}><path d="M-1 3 L4 -5 L6 -3 L1 4 Z M-1 3 L-2 6 L1 4 M-2 -1 Q-6 -1 -5 3 Q-3 5 -1 3 M2 6 Q5 6 5 2" stroke="#fff" /></Icon></TrayButton>
            <TrayButton $w={32} aria-label="Touch keyboard"><Icon size={20}><rect x="-8.500" y="-4.500" width="17" height="9" stroke="#fff" /><path d="M-6.500 -2 H7 M-6.500 0 H7" stroke="#fff" strokeDasharray="1.500 1" /><path d="M-4 2.500 H4" stroke="#fff" /></Icon></TrayButton>
            <Clock>9:38 AM<br />3/30/2021</Clock>
            <TrayButton $w={40} aria-label="Notifications"><Icon size={16}><path d="M-6 -6 H6 V3 H2 L0 6 V3 H-6 Z" stroke="#fff" strokeWidth="1.200" /></Icon></TrayButton>
          </Tray>
        </TaskBar>
      </Screen>
    </>
  );
}
